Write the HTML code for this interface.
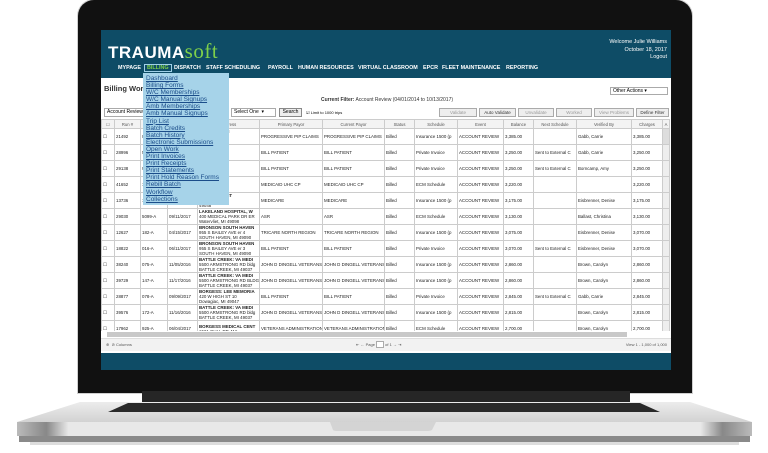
<!DOCTYPE html>
<html><head><meta charset="utf-8"><style>
*{margin:0;padding:0;box-sizing:border-box}
body{width:768px;height:453px;background:#fff;position:relative;overflow:hidden;font-family:"Liberation Sans",sans-serif}
.a{position:absolute}
#bezel{left:78px;top:0;width:614px;height:393px;background:#111;border-radius:16px 16px 0 0;box-shadow:0 0 0 1px #cfcfcf}
#hinge{left:142px;top:391px;width:488px;height:11px;background:#262626}
#scr{left:101px;top:30px;width:570px;height:340px;background:#fff;overflow:hidden}
#hdr{left:0;top:0;width:570px;height:48px;background:#0e4c66}
#band{left:0;top:323px;width:570px;height:17px;background:#0e4c66}
.logo{left:7px;top:9px;font-weight:bold;color:#fff;font-size:17px;letter-spacing:.5px}
.logo span{color:#7ed04a;font-family:"Liberation Serif",serif;font-weight:normal;font-size:21px}
.nav{top:35px;color:#fff;font-size:5.4px;font-weight:bold;white-space:nowrap}
.wel{right:4px;top:9px;color:#fff;font-size:5.5px;text-align:right;line-height:7.5px}
#menu{left:42px;top:43px;width:86px;height:132px;background:#a6d3e9;padding:2px 3px;font-size:6.5px;line-height:7.1px;color:#1b4d8a}
#menu div{text-decoration:underline}
.billing{left:43px;top:34px;font-size:5.4px;font-weight:bold;color:#7ed04a;border:1px solid #9fd0e8;padding:0 2px;background:#0e4c66}
table{border-collapse:collapse;table-layout:fixed;font-size:4.4px;color:#222}
td{border:1px solid #ccc;height:16px;padding:0 1px;white-space:nowrap;overflow:hidden;line-height:5px}
th{border:1px solid #ccc;height:9px;font-weight:normal;background:#f3f3f3;font-size:4.2px;color:#555}
.btn{height:9px;border:1px solid #aaa;background:#eee;font-size:4.5px;color:#999;text-align:center;line-height:7px;top:78px}
</style></head><body>
<div id="bezel" class="a"></div>
<div id="hinge" class="a"></div>
<svg class="a" style="left:0;top:398px" width="768" height="55">
<defs><linearGradient id="g" x1="0" x2="0" y1="0" y2="1"><stop offset="0" stop-color="#ececec"/><stop offset="1" stop-color="#d2d2d2"/></linearGradient>
<linearGradient id="h" x1="0" x2="1"><stop offset="0" stop-color="#bbb"/><stop offset=".04" stop-color="#888"/><stop offset=".07" stop-color="#e8e8e8"/><stop offset=".93" stop-color="#e8e8e8"/><stop offset=".96" stop-color="#888"/><stop offset="1" stop-color="#bbb"/></linearGradient></defs>
<path d="M80 4 L690 4 L752 24 L17 24 Z" fill="url(#g)"/>
<path d="M128 5 L640 5 L660 14 L108 14 Z" fill="#2a2a2a"/>
<rect x="17" y="24" width="735" height="14" fill="url(#h)"/>
<path d="M330 24 L436 24 L432 32 Q430 33 428 33 L338 33 Q334 33 333 32 Z" fill="#d4d4d4"/>
<rect x="19" y="38" width="731" height="6" fill="#8a8a8a"/>
<rect x="30" y="44" width="709" height="3" fill="#ddd"/>
</svg>
<div id="scr" class="a">
 <div id="hdr" class="a"></div>
 <div class="a logo">TRAUMA<span>soft</span></div>
 <div class="a nav" style="left:17px">MYPAGE</div>
 <div class="a nav" style="left:73px">DISPATCH</div>
 <div class="a nav" style="left:105px">STAFF SCHEDULING</div>
 <div class="a nav" style="left:167px">PAYROLL</div>
 <div class="a nav" style="left:197px">HUMAN RESOURCES</div>
 <div class="a nav" style="left:257px">VIRTUAL CLASSROOM</div>
 <div class="a nav" style="left:322px">EPCR</div>
 <div class="a nav" style="left:341px">FLEET MAINTENANCE</div>
 <div class="a nav" style="left:405px">REPORTING</div>
 <div class="a wel">Welcome Julie Williams<br>October 18, 2017<br>Logout</div>
 <div class="a" style="left:3px;top:54px;font-size:7.5px;font-weight:bold;color:#333">Billing Worklist</div>
 <div class="a" style="left:220px;top:67px;font-size:5px;color:#333"><b>Current Filter:</b> Account Review (04/01/2014 to 10/13/2017)</div>
 <div class="a" style="left:509px;top:57px;width:58px;height:8px;border:1px solid #aaa;font-size:5px;padding-left:2px">Other Actions ▾</div>
 <div class="a" style="left:3px;top:78px;width:44px;height:9px;border:1px solid #aaa;font-size:5px;padding-left:2px">Account Review</div>
 <div class="a" style="left:130px;top:78px;width:45px;height:9px;border:1px solid #aaa;font-size:5px;padding-left:2px">Select One &nbsp;▾</div>
 <div class="a" style="left:178px;top:78px;width:23px;height:9px;border:1px solid #888;background:#eee;font-size:5px;text-align:center">Search</div>
 <div class="a" style="left:205px;top:80px;font-size:4px">☑ Limit to 1000 trips</div>
 <div class="a btn" style="left:338px;width:38px">Validate</div>
 <div class="a btn" style="left:378px;width:37px;color:#333">Auto Validate</div>
 <div class="a btn" style="left:417px;width:36px">Unvalidate</div>
 <div class="a btn" style="left:455px;width:36px">Worked</div>
 <div class="a btn" style="left:493px;width:40px">View Problems</div>
 <div class="a btn" style="left:535px;width:33px;color:#333">Define Filter</div>
 <table class="a" style="left:0;top:89px;width:568px">
 <colgroup><col style="width:13px"><col style="width:26px"><col style="width:27px"><col style="width:30px"><col style="width:62px"><col style="width:63px"><col style="width:62px"><col style="width:30px"><col style="width:43px"><col style="width:46px"><col style="width:30px"><col style="width:43px"><col style="width:55px"><col style="width:31px"><col style="width:7px"></colgroup>
 <tr><th>☐</th><th>Run #</th><th>Inc</th><th>Date</th><th>Address</th><th>Primary Payor</th><th>Current Payor</th><th>Status</th><th>Schedule</th><th>Event</th><th>Balance</th><th>Next Schedule</th><th>Verified By</th><th>Charges</th><th>A</th></tr>
 <tr><td>☐</td><td>21492</td><td>0</td><td></td><td><b>MEDICAL CEN</b><br>E er27<br>49085</td><td>PROGRESSIVE PIP CLAIMS</td><td>PROGRESSIVE PIP CLAIMS</td><td>Billed</td><td>Insurance 1500 (p</td><td>ACCOUNT REVIEW</td><td>3,385.00</td><td></td><td>Gabb, Carrie</td><td>3,385.00</td><td style="background:#ddd"></td></tr>
 <tr><td>☐</td><td>28996</td><td>5</td><td></td><td><b>MEMORIA</b><br>er6<br>49047</td><td>BILL PATIENT</td><td>BILL PATIENT</td><td>Billed</td><td>Private Invoice</td><td>ACCOUNT REVIEW</td><td>3,250.00</td><td>Sent to External C</td><td>Gabb, Carrie</td><td>3,250.00</td><td style="background:#eee"></td></tr>
 <tr><td>☐</td><td>29138</td><td>9</td><td></td><td><b>MEMORIA</b><br>3<br>49047</td><td>BILL PATIENT</td><td>BILL PATIENT</td><td>Billed</td><td>Private Invoice</td><td>ACCOUNT REVIEW</td><td>3,250.00</td><td>Sent to External C</td><td>Borncamp, Amy</td><td>3,250.00</td><td style="background:#eee"></td></tr>
 <tr><td>☐</td><td>41652</td><td>1</td><td></td><td><b>MEMORIA</b><br>er5<br>49047</td><td>MEDICAID UHC CP</td><td>MEDICAID UHC CP</td><td>Billed</td><td>ECM Schedule</td><td>ACCOUNT REVIEW</td><td>3,220.00</td><td></td><td></td><td>3,220.00</td><td style="background:#eee"></td></tr>
 <tr><td>☐</td><td>13736</td><td>1</td><td></td><td><b>MEDICAL CENT</b><br>265<br>49048</td><td>MEDICARE</td><td>MEDICARE</td><td>Billed</td><td>Insurance 1500 (p</td><td>ACCOUNT REVIEW</td><td>3,175.00</td><td></td><td>Eisbrenner, Denise</td><td>3,175.00</td><td style="background:#eee"></td></tr>
 <tr><td>☐</td><td>29030</td><td>5099-A</td><td>09/11/2017</td><td><b>LAKELAND HOSPITAL, W</b><br>400 MEDICAL PARK DR ER<br>Watervliet, MI 49098</td><td>ASR</td><td>ASR</td><td>Billed</td><td>ECM Schedule</td><td>ACCOUNT REVIEW</td><td>3,130.00</td><td></td><td>Ballast, Christina</td><td>3,130.00</td><td style="background:#eee"></td></tr>
 <tr><td>☐</td><td>12627</td><td>182-A</td><td>04/15/2017</td><td><b>BRONSON SOUTH HAVEN</b><br>955 S BAILEY AVE er 4<br>SOUTH HAVEN, MI 49090</td><td>TRICARE NORTH REGION</td><td>TRICARE NORTH REGION</td><td>Billed</td><td>Insurance 1500 (p</td><td>ACCOUNT REVIEW</td><td>3,075.00</td><td></td><td>Eisbrenner, Denise</td><td>3,070.00</td><td style="background:#eee"></td></tr>
 <tr><td>☐</td><td>18822</td><td>016-A</td><td>06/11/2017</td><td><b>BRONSON SOUTH HAVEN</b><br>955 S BAILEY AVE er 3<br>SOUTH HAVEN, MI 49090</td><td>BILL PATIENT</td><td>BILL PATIENT</td><td>Billed</td><td>Private Invoice</td><td>ACCOUNT REVIEW</td><td>3,070.00</td><td>Sent to External C</td><td>Eisbrenner, Denise</td><td>3,070.00</td><td style="background:#eee"></td></tr>
 <tr><td>☐</td><td>38240</td><td>075-A</td><td>11/05/2016</td><td><b>BATTLE CREEK: VA MEDI</b><br>5500 ARMSTRONG RD bldg<br>BATTLE CREEK, MI 49037</td><td>JOHN D DINGELL VETERANS</td><td>JOHN D DINGELL VETERANS</td><td>Billed</td><td>Insurance 1500 (p</td><td>ACCOUNT REVIEW</td><td>2,860.00</td><td></td><td>Brown, Carolyn</td><td>2,860.00</td><td style="background:#eee"></td></tr>
 <tr><td>☐</td><td>39729</td><td>147-A</td><td>11/17/2016</td><td><b>BATTLE CREEK: VA MEDI</b><br>5500 ARMSTRONG RD BLDG 2<br>BATTLE CREEK, MI 49037</td><td>JOHN D DINGELL VETERANS</td><td>JOHN D DINGELL VETERANS</td><td>Billed</td><td>Insurance 1500 (p</td><td>ACCOUNT REVIEW</td><td>2,860.00</td><td></td><td>Brown, Carolyn</td><td>2,860.00</td><td style="background:#eee"></td></tr>
 <tr><td>☐</td><td>28877</td><td>078-A</td><td>09/09/2017</td><td><b>BORGESS: LEE MEMORIA</b><br>420 W HIGH ST 10<br>Dowagiac, MI 49047</td><td>BILL PATIENT</td><td>BILL PATIENT</td><td>Billed</td><td>Private Invoice</td><td>ACCOUNT REVIEW</td><td>2,845.00</td><td>Sent to External C</td><td>Gabb, Carrie</td><td>2,845.00</td><td style="background:#eee"></td></tr>
 <tr><td>☐</td><td>39576</td><td>172-A</td><td>11/16/2016</td><td><b>BATTLE CREEK: VA MEDI</b><br>5500 ARMSTRONG RD bldg<br>BATTLE CREEK, MI 49037</td><td>JOHN D DINGELL VETERANS</td><td>JOHN D DINGELL VETERANS</td><td>Billed</td><td>Insurance 1500 (p</td><td>ACCOUNT REVIEW</td><td>2,815.00</td><td></td><td>Brown, Carolyn</td><td>2,815.00</td><td style="background:#eee"></td></tr>
 <tr><td>☐</td><td>17962</td><td>925-A</td><td>06/04/2017</td><td><b>BORGESS MEDICAL CENT</b><br>1521 GULL RD 416</td><td>VETERANS ADMINISTRATION</td><td>VETERANS ADMINISTRATION</td><td>Billed</td><td>ECM Schedule</td><td>ACCOUNT REVIEW</td><td>2,700.00</td><td></td><td>Brown, Carolyn</td><td>2,700.00</td><td style="background:#eee"></td></tr>
 </table>
 <div class="a" style="left:0;top:301px;width:570px;height:9px;background:#fff"></div>
 <div class="a" style="left:6px;top:302px;width:520px;height:5px;background:#c8c8c8"></div>
 <div class="a" style="left:0;top:308px;width:570px;height:13px;background:#f2f2f2;border-top:1px solid #ddd;font-size:4px;color:#555;line-height:12px">
  <span class="a" style="left:5px">⊕ &nbsp;⊘ Columns</span>
  <span class="a" style="left:255px">⇤ ← Page <span style="display:inline-block;width:8px;height:7px;border:1px solid #aaa;background:#fff;vertical-align:middle"></span> of 1 → ⇥</span>
  <span class="a" style="right:4px">View 1 - 1,000 of 1,000</span>
 </div>
 <div id="band" class="a"></div>
 <div class="a billing">BILLING</div>
 <div id="menu" class="a">
  <div>Dashboard</div><div>Billing Forms</div><div>W/C Memberships</div><div>W/C Manual Signups</div><div>Amb Memberships</div><div>Amb Manual Signups</div><div>Trip List</div><div>Batch Credits</div><div>Batch History</div><div>Electronic Submissions</div><div>Open Work</div><div>Print Invoices</div><div>Print Receipts</div><div>Print Statements</div><div>Print Hold Reason Forms</div><div>Rebill Batch</div><div>Workflow</div><div>Collections</div>
 </div>
</div>
</body></html>
